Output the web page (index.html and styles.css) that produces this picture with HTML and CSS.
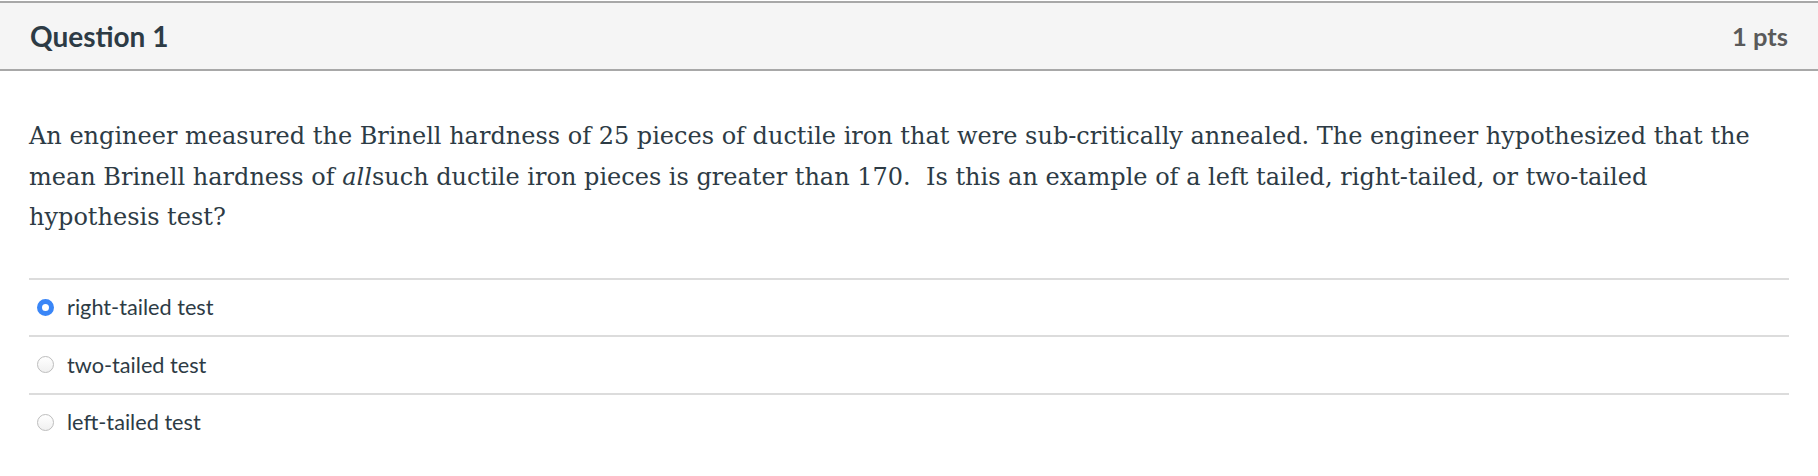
FILE: index.html
```html
<!DOCTYPE html>
<html lang="en">
<head>
<meta charset="utf-8">
<title>Question 1</title>
<link rel="stylesheet" href="styles.css">
</head>
<body>
<div class="question">
  <div class="question-header">
    <span class="question-name">Question 1</span>
    <span class="question-points">1 pts</span>
  </div>
  <div class="question-content">
    <p class="question-text">An engineer measured the Brinell hardness of 25 pieces of ductile iron that were sub-critically annealed. The engineer hypothesized that the mean Brinell hardness of <em>all</em>such ductile iron pieces is greater than 170.&nbsp; Is this an example of a left tailed, right-tailed, or two-tailed hypothesis test?</p>
    <div class="answers">
      <label class="answer">
        <span class="radio checked"></span>
        <span class="answer-text">right-tailed test</span>
      </label>
      <label class="answer">
        <span class="radio"></span>
        <span class="answer-text">two-tailed test</span>
      </label>
      <label class="answer">
        <span class="radio"></span>
        <span class="answer-text">left-tailed test</span>
      </label>
    </div>
  </div>
</div>
</body>
</html>
```

FILE: styles.css
```css
html, body {
  margin: 0;
  padding: 0;
  background: #ffffff;
}

body {
  padding-top: 1px;
  font-family: Lato, "Liberation Sans", sans-serif;
  color: #2d3b45;
}

.question-header {
  display: flex;
  align-items: center;
  justify-content: space-between;
  height: 66px;
  padding: 0 30px;
  background: #f5f5f5;
  border-top: 2px solid #a8a8a8;
  border-bottom: 2px solid #a8a8a8;
}

.question-name {
  font-size: 28px;
  font-weight: 700;
  color: #2d3b45;
}

.question-points {
  font-size: 25.5px;
  font-weight: 700;
  color: #5a5a5a;
}

.question-content {
  padding: 45px 29px 0 29px;
}

.question-text {
  margin: 0;
  padding-right: 24px;
  font-family: "DejaVu Serif", Georgia, serif;
  font-size: 24px;
  line-height: 40.5px;
  color: #2d3b45;
}

.answers {
  margin-top: 40px;
}

.answer {
  display: flex;
  align-items: center;
  height: 55.5px;
  border-top: 2px solid #dcdcdc;
  padding-left: 8px;
}

.radio {
  box-sizing: border-box;
  width: 17px;
  height: 17px;
  border-radius: 50%;
  border: 1px solid #bdbdbd;
  background: linear-gradient(#ffffff, #f0f0f0);
  flex: none;
}

.radio.checked {
  border: 5.5px solid #3a86f7;
  background: #ffffff;
}

.answer-text {
  margin-left: 13px;
  font-size: 21.7px;
  color: #2d3b45;
}
```
